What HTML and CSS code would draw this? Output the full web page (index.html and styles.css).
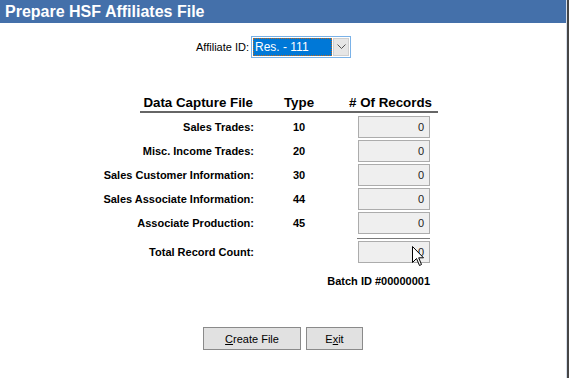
FILE: index.html
```html
<!DOCTYPE html>
<html>
<head>
<meta charset="utf-8">
<link rel="stylesheet" href="styles.css">
</head>
<body>
<div class="frame">
  <div class="window">
    <div class="titlebar">Prepare HSF Affiliates File</div>
    <div class="affiliate">
      <span class="aff-label">Affiliate ID:</span>
      <div class="select">
        <div class="select-value">Res. - 111</div>
        <div class="select-btn">
          <svg width="9" height="6" viewBox="0 0 9 6"><path d="M0.5 0.5 L4.5 4.5 L8.5 0.5" fill="none" stroke="#555" stroke-width="1"/></svg>
        </div>
      </div>
    </div>

    <div class="grid">
      <div class="head c1">Data Capture File</div>
      <div class="head c2">Type</div>
      <div class="head c3">#&nbsp;Of Records</div>

      <div class="label"><span>Sales Trades:</span></div>
      <div class="type">10</div>
      <div class="rec"><div class="box">0</div></div>

      <div class="label"><span>Misc. Income Trades:</span></div>
      <div class="type">20</div>
      <div class="rec"><div class="box">0</div></div>

      <div class="label"><span>Sales Customer Information:</span></div>
      <div class="type">30</div>
      <div class="rec"><div class="box">0</div></div>

      <div class="label"><span>Sales Associate Information:</span></div>
      <div class="type">44</div>
      <div class="rec"><div class="box">0</div></div>

      <div class="label"><span>Associate Production:</span></div>
      <div class="type">45</div>
      <div class="rec"><div class="box">0</div></div>

      <div class="sep"></div>

      <div class="label"><span>Total Record Count:</span></div>
      <div class="type"></div>
      <div class="rec total">
        <div class="box">0</div>
        <svg class="cursor" width="13" height="21" viewBox="0 0 13 21"><path d="M0.5 0.5 L0.5 16.5 L4.5 12.5 L7.5 19.5 L9.5 18.5 L6.7 11.8 L11.5 11.8 Z" fill="#fff" stroke="#000" stroke-width="1" stroke-linejoin="miter"/></svg>
      </div>

      <div class="batch">Batch ID #00000001</div>
    </div>

    <div class="buttons">
      <button class="btn create"><u>C</u>reate File</button>
      <button class="btn exit">E<u>x</u>it</button>
    </div>
  </div>
  <div class="edge"></div>
</div>
</body>
</html>
```

FILE: styles.css
```css
html, body {
  margin: 0;
  padding: 0;
  background: #fff;
}
body {
  font-family: "Liberation Sans", Arial, sans-serif;
  color: #000;
  width: 569px;
  height: 378px;
  overflow: hidden;
}
.frame {
  display: flex;
  height: 378px;
}
.window {
  width: 566px;
  border-right: 1px solid #d6deea;
  background: #fff;
}
.edge {
  width: 2px;
  background: #464646;
}
.titlebar {
  height: 23px;
  line-height: 24px;
  background: #4470aa;
  color: #fff;
  font-weight: bold;
  font-size: 16px;
  padding-left: 5px;
}
.affiliate {
  display: flex;
  align-items: center;
  margin-top: 13px;
  padding-left: 196px;
  gap: 2px;
}
.aff-label {
  font-size: 11px;
}
.select {
  width: 100px;
  height: 22px;
  box-sizing: border-box;
  border: 1px solid #7ab2e8;
  display: flex;
  padding: 1px;
  gap: 1px;
}
.select-value {
  flex: 1;
  background: #0078d7;
  color: #fff;
  border: 1px dotted #c0691a;
  font-size: 12px;
  line-height: 16px;
  padding-left: 1px;
}
.select-btn {
  width: 16px;
  background: #e6e6e6;
  border: 1px solid #cfcfcf;
  box-sizing: border-box;
  display: flex;
  align-items: center;
  justify-content: center;
}
.grid {
  margin-top: 37px;
  margin-left: 140px;
  width: 298px;
  display: grid;
  grid-template-columns: 118px 82px 98px;
  grid-auto-rows: auto;
  row-gap: 2px;
}
.head {
  font-weight: bold;
  font-size: 13.33px;
  line-height: 16px;
  border-bottom: 2px solid #666;
  margin-bottom: 1px;
}
.head.c1 {
  text-align: right;
  padding-right: 5px;
}
.head.c2 {
  text-align: center;
}
.head.c3 {
  text-align: right;
  padding-right: 6px;
}
.label {
  display: flex;
  justify-content: flex-end;
  font-weight: bold;
  font-size: 11px;
  padding-right: 4px;
  line-height: 22px;
  white-space: nowrap;
  min-width: 0;
}
.label span {
  flex: none;
}
.type {
  font-weight: bold;
  font-size: 11px;
  text-align: center;
  line-height: 22px;
}
.rec {
  display: flex;
  justify-content: flex-end;
  padding-right: 8px;
}
.box {
  width: 72px;
  height: 22px;
  box-sizing: border-box;
  border: 1px solid #acacac;
  background: #efefef;
  font-size: 11px;
  line-height: 20px;
  text-align: right;
  padding-right: 5px;
  color: #222;
}
.sep {
  grid-column: 3;
  height: 1px;
  background: #7a7a7a;
  margin: 2px 8px 0 17px;
}
.total {
  position: relative;
}
.cursor {
  position: absolute;
  left: 72px;
  top: 5px;
}
.batch {
  grid-column: 1 / -1;
  text-align: right;
  padding-right: 8px;
  font-weight: bold;
  font-size: 11px;
  line-height: 14px;
  margin-top: 9px;
}
.buttons {
  display: flex;
  justify-content: center;
  gap: 5px;
  margin-top: 39px;
}
.btn {
  height: 23px;
  box-sizing: border-box;
  border: 1px solid #8a8a8a;
  background: #e1e1e1;
  font-family: "Liberation Sans", Arial, sans-serif;
  font-size: 11px;
  color: #000;
  padding: 0;
  border-radius: 0;
}
.btn.create {
  width: 98px;
}
.btn.exit {
  width: 57px;
}
.btn u {
  text-decoration: underline;
}
```
